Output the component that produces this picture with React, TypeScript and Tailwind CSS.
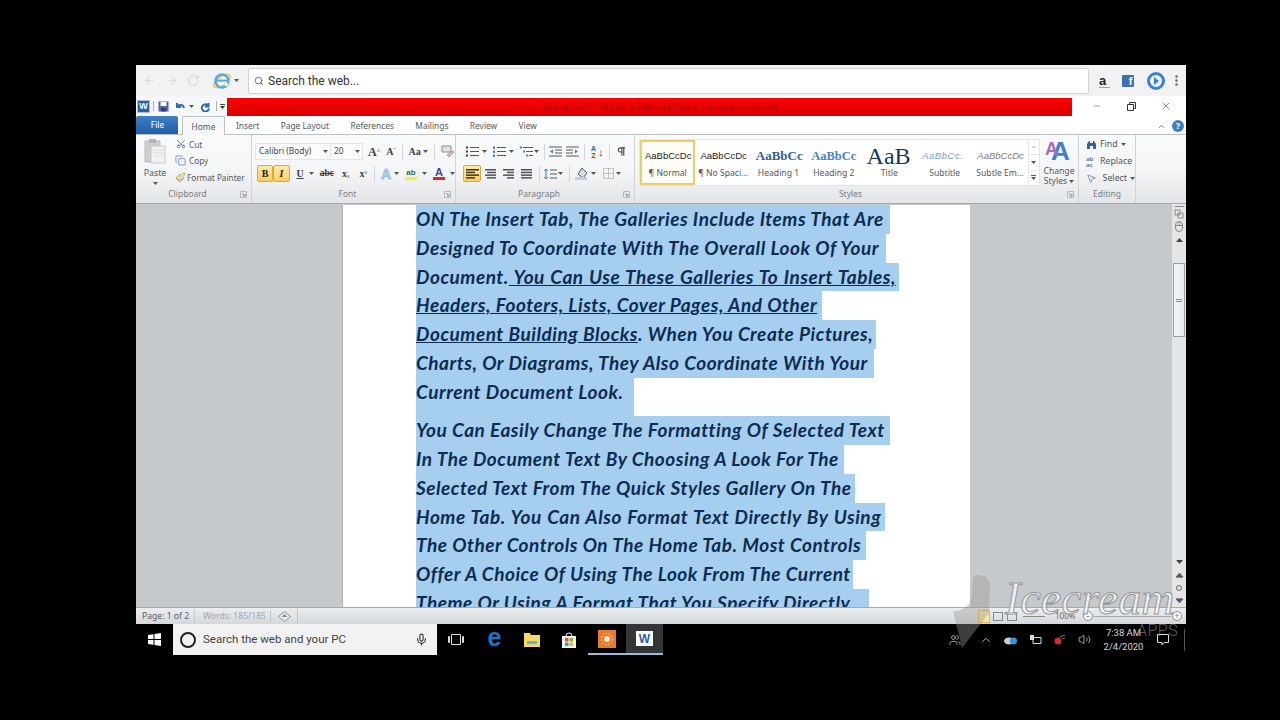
import React from "react";
import { ArrowLeft, ArrowRight, RotateCw, Search, X, Minus, Mic, ChevronUp, Scissors, Copy, Paintbrush, Volume2, Pilcrow, MousePointer2, Users } from "lucide-react";

const ui = "font-['Noto_Sans','Open_Sans',sans-serif]";

const Caret = ({ c = "#555" }: { c?: string }) => (
  <svg width="5" height="3" viewBox="0 0 5 3" className="shrink-0"><path d="M0 0h5L2.5 3z" fill={c} /></svg>
);

const Launcher = () => (
  <svg width="7" height="7" viewBox="0 0 7 7" className="shrink-0"><path d="M.5.5h6v6h-6z" fill="none" stroke="#b5b9be" /><path d="M2 2l3 3M5 3v2H3" stroke="#8d9196" fill="none" /></svg>
);

const Lines = ({ align = "left", active = false }: { align?: "left" | "center" | "right" | "justify"; active?: boolean }) => {
  const rows: Record<string, [number, number][]> = {
    left: [[1, 13], [1, 9], [1, 13], [1, 9]],
    center: [[1, 11], [3, 9], [1, 11], [3, 9]],
    right: [[1, 11], [5, 7], [1, 11], [5, 7]],
    justify: [[1, 11], [1, 11], [1, 11], [1, 11]],
  };
  return (
    <svg width="14" height="11" viewBox="0 0 14 11">
      {rows[align].map((r, i) => (
        <rect key={i} x={r[0]} y={1 + i * 2.7} width={r[1]} height="1.5" fill={active ? "#3d3520" : "#50545a"} />
      ))}
    </svg>
  );
};

const Group = ({ label, width, launcher = true, children }: { label: string; width: string; launcher?: boolean; children: React.ReactNode }) => (
  <div className={`${width} h-full flex flex-col border-r border-[#cfd2d6] shrink-0`}>
    <div className="flex-1 min-h-0">{children}</div>
    <div className={`h-[14px] mb-[2px] flex items-center justify-center relative text-[8.5px] text-[#7a7e83] ${launcher ? "pr-[12px]" : ""}`}>
      {label}
      {launcher && <span className="absolute right-[4px] top-[4px] flex"><Launcher /></span>}
    </div>
  </div>
);

const styleItems: { s: string; l: string; c: string }[] = [
  { s: "AaBbCcDc", l: "¶ Normal", c: "text-[9.5px] text-[#222] font-['Liberation_Sans',sans-serif]" },
  { s: "AaBbCcDc", l: "¶ No Spaci...", c: "text-[9.5px] text-[#222] font-['Liberation_Sans',sans-serif]" },
  { s: "AaBbCc", l: "Heading 1", c: "text-[13px] font-bold text-[#365f91] font-['Liberation_Serif',serif]" },
  { s: "AaBbCc", l: "Heading 2", c: "text-[12.500px] font-bold text-[#4f81bd] font-['Liberation_Serif',serif]" },
  { s: "AaB", l: "Title", c: "text-[24px] leading-[20px] text-[#17365d] font-['Liberation_Serif',serif]" },
  { s: "AaBbCc.", l: "Subtitle", c: "text-[9.5px] italic tracking-[0.6px] text-[#7b9cc7] font-['Liberation_Sans',sans-serif]" },
  { s: "AaBbCcDc", l: "Subtle Em...", c: "text-[9.5px] italic text-[#808080] font-['Liberation_Sans',sans-serif]" },
];

const lines1: { w: string; t: React.ReactNode; h?: string; s?: string }[] = [
  { w: "w-[474px]", t: "ON The Insert Tab, The Galleries Include Items That Are" },
  { w: "w-[470px]", t: "Designed To Coordinate With The Overall Look Of Your" },
  { w: "w-[483px]", t: <>Document.<span className="underline"> You Can Use These Galleries To Insert Tables,</span></>, s: "[word-spacing:0.7px]" },
  { w: "w-[406px]", t: <span className="underline">Headers, Footers, Lists, Cover Pages, And Other</span> },
  { w: "w-[460px]", t: <><span className="underline">Document Building Blocks</span>. When You Create Pictures,</> },
  { w: "w-[458px]", t: "Charts, Or Diagrams, They Also Coordinate With Your" },
  { w: "w-[218px]", t: "Current Document Look.", h: "h-[38.400px]" },
  { w: "w-[474px]", t: "You Can Easily Change The Formatting Of Selected Text" },
  { w: "w-[428px]", t: "In The Document Text By Choosing A Look For The" },
  { w: "w-[439px]", t: "Selected Text From The Quick Styles Gallery On The" },
  { w: "w-[469px]", t: "Home Tab. You Can Also Format Text Directly By Using", s: "[word-spacing:0.7px]" },
  { w: "w-[450px]", t: "The Other Controls On The Home Tab. Most Controls" },
  { w: "w-[437px]", t: "Offer A Choice Of Using The Look From The Current" },
  { w: "w-[453px]", t: "Theme Or Using A Format That You Specify Directly." },
];

const BrowserBar = () => (
  <div className="h-[31px] bg-[#f2f2f2] flex items-center shrink-0">
    <div className="w-[112px] flex items-center pl-[7px] gap-[9px] text-[#dadada] shrink-0">
      <ArrowLeft size={13} strokeWidth={2} />
      <ArrowRight size={13} strokeWidth={2} />
      <RotateCw size={13} strokeWidth={2} />
      <svg width="20" height="20" viewBox="0 0 20 20" className="ml-[3px] shrink-0">
        <ellipse cx="10" cy="10" rx="9.5" ry="4.5" transform="rotate(-35 10 10)" fill="none" stroke="#e6c34a" strokeWidth="1.5" />
        <circle cx="10" cy="10" r="6.5" fill="none" stroke="#53a8e2" strokeWidth="2.4" />
        <path d="M4.5 9.6h11" stroke="#53a8e2" strokeWidth="2" />
        <path d="M13 13l3 1" stroke="#f2f2f2" strokeWidth="3" />
      </svg>
      <span className="-ml-[7px]"><Caret /></span>
    </div>
    <div className="w-[841px] h-[26px] bg-white border border-[#d2d2d2] rounded-[2px] flex items-center pl-[5px] gap-[4px] shrink-0">
      <Search size={10} strokeWidth={2} className="text-[#555]" />
      <span className="text-[12px] text-[#333] font-['Roboto',sans-serif]">Search the web...</span>
    </div>
    <div className="flex-1 flex items-center pl-[10px] gap-[12px]">
      <span className="text-[13px] font-bold text-[#222] leading-none w-[11px] font-['Liberation_Sans',sans-serif] border-b border-[#e8952e]">a</span>
      <span className="w-[12px] h-[12px] bg-[#3b6fb6] rounded-[1px] flex items-end justify-end pr-[1.5px] text-white text-[11px] font-bold leading-none font-['Liberation_Sans',sans-serif]">f</span>
      <svg width="20" height="20" viewBox="0 0 20 20">
        <circle cx="10" cy="10" r="7.5" fill="none" stroke="#3a80d4" strokeWidth="3" />
        <path d="M8 6v8l5-4z" fill="#3a80d4" />
      </svg>
      <svg width="3" height="11" viewBox="0 0 3 11" className="-ml-[3px]"><circle cx="1.5" cy="1.5" r="1.2" fill="#666" /><circle cx="1.5" cy="5.5" r="1.2" fill="#666" /><circle cx="1.5" cy="9.5" r="1.2" fill="#666" /></svg>
    </div>
  </div>
);

const TitleBar = () => (
  <div className="h-[20px] bg-white flex items-center shrink-0">
    <div className="w-[91px] h-full flex items-center pl-[1px] gap-[3px] bg-[#f7f8fa] shrink-0">
      <span className="w-[13px] h-[13px] bg-[#2f5ea8] border border-[#a8c0e0] text-white text-[9px] leading-[11px] font-bold text-center font-['Liberation_Sans',sans-serif]">W</span>
      <span className="w-px h-[10px] bg-[#aab0b8]" />
      <svg width="11" height="11" viewBox="0 0 11 11" className="ml-[1px]"><path d="M.5.5h10v10H.5z" fill="#5263a8" /><path d="M2.5 1h6v4h-6z" fill="#fff" /><path d="M3 7h5v3.5H3z" fill="#2c3a70" /></svg>
      <svg width="12" height="11" viewBox="0 0 12 11" className="ml-[2px]"><path d="M3 2v4h4M3 6c2-3 6-3 7 1" fill="none" stroke="#2f6bb5" strokeWidth="2" /></svg>
      <Caret />
      <svg width="11" height="11" viewBox="0 0 11 11" className="ml-[3px]"><path d="M8.5 2v3.5H5M8.5 5A3.6 3.6 0 1 0 9 7.5" fill="none" stroke="#2f6bb5" strokeWidth="2" /></svg>
      <span className="w-px h-[10px] bg-[#aab0b8] ml-[2px]" />
      <span className="flex flex-col items-center gap-[1px]"><span className="w-[5px] h-px bg-[#444]" /><Caret c="#333" /></span>
    </div>
    <div className="w-[845px] h-[18px] mt-[1px] bg-gradient-to-b from-[#ff0000] to-[#d80000] flex items-center justify-center pl-[22px] shrink-0">
      <span className={`text-[9px] text-[#a80f0f] ${ui}`}>Document1 - Microsoft Word (Product Activation Failed)</span>
    </div>
    <div className="flex-1 flex items-center pl-[20px] text-[#444]">
      <Minus size={10} strokeWidth={1.2} />
      <svg width="9" height="9" viewBox="0 0 9 9" className="ml-[25px]"><path d="M.5 2.5h6v6h-6zM2.5 2.5v-2h6v6h-2" fill="none" stroke="#333" /></svg>
      <X size={12} strokeWidth={1.2} className="ml-[24px]" />
    </div>
  </div>
);

const TabBar = () => (
  <div className={`h-[19px] bg-white border-b border-[#bcbfc3] flex items-end shrink-0 text-[8.400px] text-[#53575c] ${ui}`}>
    <div className="w-[42px] h-[18px] bg-gradient-to-b from-[#3f80c6] to-[#1f5ca8] rounded-t-[2px] text-white flex items-center justify-center pl-[1px] pt-[1px] shrink-0">File</div>
    <div className="ml-[4px] w-[43px] h-[19px] bg-[#f7f8f9] border border-b-0 border-[#bcbfc3] rounded-t-[2px] -mb-px flex items-center justify-center pt-[2px] shrink-0">Home</div>
    <div className="h-[18px] flex items-center gap-[21.400px] pl-[11px] pt-[2px] flex-1">
      <span>Insert</span><span>Page Layout</span><span>References</span><span>Mailings</span><span>Review</span><span>View</span>
      <span className="flex-1" />
      <ChevronUp size={9} className="text-[#555] mr-[-15px]" />
      <span className="w-[12px] h-[12px] rounded-full bg-[#3b7fc9] text-white text-[9px] font-bold leading-[12px] text-center mr-[2px]">?</span>
    </div>
  </div>
);

const Clip = () => (
  <div className="h-full flex pl-[8px] pt-[1px]">
    <div className="w-[22px] flex flex-col items-center">
      <svg width="22" height="26" viewBox="0 0 22 26" className="mt-[2px]">
        <path d="M1 3h15v21H1z" fill="#cfcfcf" stroke="#bdbdbd" />
        <path d="M5 1h7v4H5z" fill="#b4b4b4" />
        <path d="M7 8h14v17H7z" fill="#f2f2f2" stroke="#c8c8c8" />
        <path d="M9 12h10M9 15h10M9 18h10" stroke="#dcdcdc" />
      </svg>
      <span className="text-[8.8px] mt-[4px] text-[#53575c] leading-[10px]">Paste</span>
      <span className="mt-[4px]"><Caret /></span>
    </div>
    <div className="ml-[9px] flex flex-col text-[8.2px] text-[#53575c] leading-[17px]">
      <div className="h-[16.500px] flex items-center gap-[3px] pl-[1px]"><Scissors size={10} className="text-[#4c6e9e] -rotate-90" /><span>Cut</span></div>
      <div className="h-[16.500px] flex items-center gap-[2px]"><Copy size={11} className="text-[#6e95c4]" /><span className="ml-[1px]">Copy</span></div>
      <div className="h-[16.500px] flex items-center gap-[1px]"><Paintbrush size={11} className="text-[#b59a45]" /><span className="whitespace-nowrap">Format Painter</span></div>
    </div>
  </div>
);

const Sep = ({ cls = "" }: { cls?: string }) => <span className={`w-px h-[16px] bg-[#d3d6da] ${cls}`} />;

const FontGroup = () => (
  <div className="pl-[3px] pt-[8px]">
    <div className="h-[17px] flex items-center">
      <div className="w-[76px] h-[17px] bg-[#fbfbfc] border border-[#e3e5e8] flex items-center justify-between pl-[3px] pr-[2px] text-[8.4px] text-[#444]">
        <span className="whitespace-nowrap">Calibri (Body)</span><Caret />
      </div>
      <div className="w-[32px] h-[17px] bg-[#fbfbfc] border border-l-0 border-[#e3e5e8] flex items-center justify-between pl-[3px] pr-[2px] text-[8.4px] text-[#444]">
        <span>20</span><Caret />
      </div>
      <span className="ml-[5px] text-[12px] font-bold text-[#3d4045] font-['Liberation_Serif',serif] leading-none">A<sup className="text-[6px] text-[#3d4045]">^</sup></span>
      <span className="ml-[6px] text-[10px] font-bold text-[#3d4045] font-['Liberation_Serif',serif] leading-none">A<sup className="text-[6px]">ˇ</sup></span>
      <Sep cls="ml-[7px]" />
      <span className="ml-[5px] text-[10px] font-bold text-[#3d4045] font-['Liberation_Serif',serif] leading-none">Aa</span>
      <span className="ml-[2px]"><Caret /></span>
      <Sep cls="ml-[6px]" />
      <svg width="14" height="13" viewBox="0 0 14 13" className="ml-[6px]"><path d="M1 1h9v6H1z" fill="#dfe3ea" stroke="#8a8f98" /><path d="M8 12l5-5-2-1-5 4z" fill="#e6b7c4" stroke="#8a6a76" strokeWidth=".6" /></svg>
    </div>
    <div className="h-[17px] mt-[5px] flex items-center text-[#3d4045] font-['Liberation_Serif',serif]">
      <span className="w-[18px] h-[17px] ml-[2px] bg-gradient-to-b from-[#fde9a6] to-[#fbcf5e] border border-[#d8a93f] rounded-[2px] text-[10px] font-bold flex items-center justify-center text-[#222]">B</span>
      <span className="w-[18px] h-[17px] ml-0 bg-gradient-to-b from-[#fde9a6] to-[#fbcf5e] border border-[#d8a93f] rounded-[2px] text-[10px] font-bold italic flex items-center justify-center text-[#222]">I</span>
      <span className="ml-[7px] text-[10px] font-bold underline leading-none">U</span>
      <span className="ml-[5px]"><Caret /></span>
      <span className="ml-[6px] text-[9.5px] font-bold line-through leading-none">abc</span>
      <span className="ml-[8px] text-[10px] font-bold leading-none">x<sub className="text-[5px] text-[#4a78b5]">2</sub></span>
      <span className="ml-[10px] text-[10px] font-bold leading-none">x<sup className="text-[5px] text-[#4a78b5]">2</sup></span>
      <Sep cls="ml-[7px]" />
      <span className="ml-[6px] text-[14px] font-bold text-[#b8d3ee] leading-none [-webkit-text-stroke:0.5px_#6f9fd2] font-['Liberation_Sans',sans-serif]">A</span>
      <span className="ml-[3px]"><Caret /></span>
      <span className="ml-[6px] flex flex-col items-center w-[12px]"><span className="text-[8px] font-bold text-[#3d6a3d] leading-[9px] font-['Liberation_Sans',sans-serif]">ab</span><span className="w-[12px] h-[3px] bg-[#f6ee3a]" /></span>
      <span className="ml-[5px]"><Caret /></span>
      <span className="ml-[6px] flex flex-col items-center w-[12px]"><span className="text-[11px] font-bold text-[#2f4f8f] leading-[10px] font-['Liberation_Sans',sans-serif]">A</span><span className="w-[12px] h-[3px] bg-[#d8272d]" /></span>
      <span className="ml-[5px]"><Caret /></span>
    </div>
  </div>
);

const ListIcon = ({ kind }: { kind: number }) => (
  <svg width="13" height="12" viewBox="0 0 13 12">
    {[1.5, 5.5, 9.5].map((y, i) => (
      <g key={i}>
        {kind === 0 && <rect x="0" y={y - 1} width="2" height="2" fill="#3a3d42" />}
        {kind === 1 && <rect x="0" y={y - 1} width="2" height="2.5" fill="#5a7db0" />}
        {kind === 2 && <rect x={i * 3} y={y - 1} width="2" height="2" fill="#5a7db0" />}
        <rect x={kind === 2 ? i * 3 + 3 : 4} y={y - 0.5} width={kind === 2 ? 10 - i * 3 : 9} height="1" fill="#54585d" />
      </g>
    ))}
  </svg>
);

const Indent = ({ flip = false }: { flip?: boolean }) => (
  <svg width="13" height="11" viewBox="0 0 13 11" className={flip ? "-scale-x-100" : ""}>
    <path d="M0 1h13M0 10h13M6 4h7M6 7h7" stroke="#54585d" />
    <path d="M4 3.5v4L1 5.5z" fill="#4a78b5" />
  </svg>
);

const Para = () => (
  <div className="pl-[9px] pt-[8px]">
    <div className="h-[17px] flex items-center">
      <span className="ml-[1px] flex"><ListIcon kind={0} /></span><span className="ml-[3px]"><Caret /></span>
      <span className="ml-[6px]"><ListIcon kind={1} /></span><span className="ml-[3px]"><Caret /></span>
      <span className="ml-[6px]"><ListIcon kind={2} /></span><span className="ml-[1px]"><Caret /></span>
      <Sep cls="ml-[5px]" />
      <span className="ml-[4px] flex"><Indent /></span>
      <span className="ml-[4px] flex"><Indent flip /></span>
      <Sep cls="ml-[5px]" />
      <span className="ml-[4px] w-[9px] text-[7px] leading-[7px] font-bold text-center"><span className="text-[#3d6fb0]">A</span><br /><span className="text-[#b03d3d]">Z</span></span>
      <span className="text-[11px] leading-none text-[#444]">↓</span>
      <Sep cls="ml-[5px]" />
      <Pilcrow size={11} strokeWidth={2.4} className="ml-[6px] text-[#45484c]" />
    </div>
    <div className="h-[17px] mt-[5px] flex items-center">
      <span className="w-[18px] h-[17px] -ml-[2px] bg-gradient-to-b from-[#fde9a6] to-[#fbcf5e] border border-[#d8a93f] rounded-[2px] flex items-center justify-center"><Lines active /></span>
      <span className="ml-[3px] flex"><Lines align="center" /></span>
      <span className="ml-[4px] flex"><Lines align="right" /></span>
      <span className="ml-[4px] flex"><Lines align="justify" /></span>
      <Sep cls="ml-[5px]" />
      <svg width="13" height="12" viewBox="0 0 13 12" className="ml-[4px]"><path d="M2 1v10" stroke="#4a78b5" /><path d="M0 3l2-2 2 2M0 9l2 2 2-2" fill="none" stroke="#4a78b5" /><path d="M6 2h7M6 6h7M6 10h7" stroke="#54585d" /></svg>
      <span className="ml-[1px]"><Caret /></span>
      <Sep cls="ml-[6px]" />
      <svg width="14" height="13" viewBox="0 0 14 13" className="ml-[5px]"><path d="M3 7l4-6 5 5-4 5z" fill="#d8dde6" stroke="#54585d" /><rect x="0" y="10" width="12" height="3" fill="#b6d0ea" /></svg>
      <span className="ml-[2px]"><Caret /></span>
      <svg width="11" height="11" viewBox="0 0 11 11" className="ml-[7px]"><path d="M.5.5h10v10H.5zM5.500 .5v10M.5 5.500h10" fill="none" stroke="#8d9197" strokeDasharray="1 1" /></svg>
      <span className="ml-[2px]"><Caret /></span>
    </div>
  </div>
);

const Styles = () => (
  <div className="flex pl-[4px] pt-[4px]">
    <div className="w-[401px] h-[47px] bg-white border border-[#e3e5e8] flex shrink-0">
      {styleItems.map((it, i) => (
        <div key={i} className={`w-[55.400px] h-full flex flex-col justify-between overflow-hidden shrink-0 ${i === 0 ? "border-2 border-[#f0cb6a] bg-[#fffdf5]" : ""}`}>
          <div className={`h-[22px] flex items-center whitespace-nowrap ${i === 0 ? "mt-[3px] pl-[3px]" : "mt-[5px] pl-[5px]"} ${it.c}`}>{it.s}</div>
          <div className={`text-[8.6px] leading-[12px] text-center whitespace-nowrap text-[#53575c] ${i === 0 ? "mb-[4px]" : "mb-[6px]"}`}>{it.l}</div>
        </div>
      ))}
      <div className="ml-auto w-[12px] border-l border-[#e3e5e8] flex flex-col text-[#777]">
        <div className="flex-1 flex items-center justify-center rotate-180"><Caret c="#c8c8c8" /></div>
        <div className="flex-1 flex items-center justify-center border-y border-[#e3e5e8]"><Caret /></div>
        <div className="flex-1 flex flex-col gap-px items-center justify-center"><span className="w-[5px] h-px bg-[#555]" /><Caret /></div>
      </div>
    </div>
    <div className="w-[36px] ml-[1px] flex flex-col items-center shrink-0">
      <span className="text-[26px] leading-[24px] font-bold text-[#3f7fd0] font-['Liberation_Sans',sans-serif] relative pl-[3px]">A<span className="absolute -left-[3px] top-[-2px] text-[18px] text-[#a86cc4]">A</span></span>
      <span className="text-[8.6px] leading-[10px] mt-[3px] text-[#53575c]">Change</span>
      <span className="text-[8.6px] leading-[10px] text-[#53575c] flex items-center gap-[2px]">Styles <Caret /></span>
    </div>
  </div>
);

const Editing = () => (
  <div className="flex flex-col pl-[7px] pt-[1px] text-[8.8px] text-[#53575c]">
    <div className="h-[17px] flex items-center gap-[3px]">
      <svg width="11" height="10" viewBox="0 0 11 10"><path d="M1 4l2-3h1v2h3V1h1l2 3v5H7V6H4v3H1z" fill="#3c5f95" /></svg>
      <span>Find</span><Caret />
    </div>
    <div className="h-[17px] flex items-center gap-[3px]"><span className="w-[11px] text-[6px] leading-[6px] font-bold text-[#5d7fa8]">ab<br />ac</span><span>Replace</span></div>
    <div className="h-[17px] flex items-center gap-[3px]"><MousePointer2 size={11} className="text-[#6d8cb3]" /><span className="ml-[3px]">Select</span><Caret /></div>
  </div>
);

const Ribbon = () => (
  <div className={`h-[69px] bg-gradient-to-b from-[#f9fafa] via-[#f5f6f7] to-[#e3e5e8] border-b border-[#a5a8ac] flex shrink-0 ${ui}`}>
    <Group label="Clipboard" width="w-[116px]"><Clip /></Group>
    <Group label="Font" width="w-[204px]"><FontGroup /></Group>
    <Group label="Paragraph" width="w-[179px]"><Para /></Group>
    <Group label="Styles" width="w-[444px]"><Styles /></Group>
    <Group label="Editing" width="w-[57px]" launcher={false}><Editing /></Group>
  </div>
);

const ScrollBar = () => (
  <div className="w-[14px] bg-[#e3e5e7] flex flex-col items-center shrink-0 text-[#666]">
    <span className="mt-[2px] w-[9px] h-px bg-[#888]" />
    <svg width="10" height="10" viewBox="0 0 10 10" className="mt-[2px]"><path d="M1 1h5v5H1zM4 4h5v5H4z" fill="none" stroke="#888" /></svg>
    <svg width="10" height="11" viewBox="0 0 10 11" className="mt-[2px]"><rect x="1.500" y=".5" width="7" height="10" rx="3.500" fill="none" stroke="#888" /><path d="M5 .5v4M1.500 4.500h7" stroke="#888" /></svg>
    <svg width="7" height="4" viewBox="0 0 7 4" className="mt-[6px]"><path d="M3.500 0L7 4H0z" fill="#444" /></svg>
    <div className="mt-[21px] w-[12px] h-[74px] bg-gradient-to-r from-[#f5f6f7] to-[#e8eaec] border border-[#9a9ea3] flex flex-col items-center justify-center gap-[1px]">
      <span className="w-[6px] h-px bg-[#888]" /><span className="w-[6px] h-px bg-[#888]" />
    </div>
    <div className="flex-1" />
    <svg width="7" height="4" viewBox="0 0 7 4" className="mb-[9px]"><path d="M3.500 4L7 0H0z" fill="#444" /></svg>
    <svg width="7" height="5" viewBox="0 0 7 5" className="mb-[7px]"><path d="M3.500 0L7 4H0zM0 4.500h7" fill="#555" stroke="#555" strokeWidth=".5" /></svg>
    <span className="w-[6px] h-[6px] rounded-full border border-[#666] mb-[7px]" />
    <svg width="7" height="5" viewBox="0 0 7 5" className="mb-[4px]"><path d="M3.500 5L7 1H0zM0 .5h7" fill="#555" stroke="#555" strokeWidth=".5" /></svg>
  </div>
);

const Doc = () => (
  <div className="h-[403px] bg-[#c6c9cc] flex overflow-hidden shrink-0">
    <div className="flex-1 min-w-0 pl-[206px] pt-[1px]">
      <div className="w-[628px] h-[420px] bg-white pl-[73px] border-l border-[#aeb0b3] font-['Lato','Open_Sans',sans-serif] font-bold italic text-[19px] text-[#0c2c52] tracking-[0.52px]">
        {lines1.map((l, i) => (
          <div key={i} className={`${l.w} ${l.h ?? "h-[28.800px]"} ${l.s ?? ""} bg-[#a6ceef] leading-[28.800px] whitespace-nowrap`}>{l.t}</div>
        ))}
      </div>
    </div>
    <ScrollBar />
  </div>
);

const StatusBar = () => (
  <div className={`h-[17px] bg-gradient-to-b from-[#eceef0] to-[#d5d8db] border-t border-[#a5a8ac] flex items-center text-[8.6px] text-[#5a5e63] shrink-0 ${ui}`}>
    <span className="pl-[6px] w-[59px] whitespace-nowrap border-r border-[#c3c6c9]">Page: 1 of 2</span>
    <span className="pl-[8px] w-[76px] whitespace-nowrap text-[#a3a6aa] border-r border-[#c3c6c9]">Words: 185/185</span>
    <span className="w-[27px] h-full flex items-center justify-center border-r border-[#c3c6c9]">
      <svg width="13" height="11" viewBox="0 0 13 11"><path d="M6.500 .5l6 5-6 5-6-5z" fill="#f5f0dc" stroke="#7d8fa8" /><path d="M3.500 6l3-3 3 3" fill="#5f8fc9" /></svg>
    </span>
    <div className="flex-1" />
    <div className="flex items-center pr-[4px] text-[#666]">
      <span className="w-[12px] h-[13px] border border-[#e3b74f] bg-[#f7e7ad]" />
      <span className="ml-[3px] w-[10px] h-[9px] border border-[#888]" />
      <span className="ml-[4px] w-[10px] h-[9px] border border-[#888]" />
      <span className="ml-[6px] w-[22px] h-px bg-[#888]" />
      <span className="ml-[10px] w-[20px] text-[8px] whitespace-nowrap">100%</span>
      <span className="ml-[8px] w-[10px] h-[10px] rounded-full border border-[#888] bg-white flex items-center justify-center text-[8px] leading-none">−</span>
      <span className="ml-[1px] w-[77px] h-px bg-[#aaa]" />
      <span className="ml-[1px] w-[10px] h-[10px] rounded-full border border-[#888] bg-white flex items-center justify-center text-[8px] leading-none">+</span>
    </div>
  </div>
);

const Taskbar = () => (
  <div className="h-[31px] bg-black flex items-center shrink-0 text-[#ddd]">
    <div className="w-[37px] flex justify-center shrink-0">
      <svg width="13" height="13" viewBox="0 0 13 13"><path d="M0 2l5.500-.8V6H0zM6.500 1L13 0v6H6.500zM0 7h5.500v4.800L0 11zM6.500 7H13v6l-6.500-1z" fill="#fff" /></svg>
    </div>
    <div className="w-[264px] h-[31px] bg-[#f2f2f2] flex items-center pl-[7px] shrink-0">
      <span className="w-[16px] h-[16px] rounded-full border-[2.500px] border-[#222] shrink-0" />
      <span className="ml-[7px] text-[11.500px] text-[#444] font-['Roboto',sans-serif] whitespace-nowrap">Search the web and your PC</span>
      <Mic size={13} className="ml-auto mr-[9px] text-[#333]" />
    </div>
    <div className="w-[38px] flex justify-center shrink-0">
      <svg width="16" height="11" viewBox="0 0 16 11"><path d="M3.500.5h9v10h-9zM.5 2.500h1v6h-1zM14.500 2.500h1v6h-1z" fill="none" stroke="#ddd" /></svg>
    </div>
    <div className="w-[39px] flex justify-center shrink-0 text-[#1678d2] text-[25px] font-bold leading-none pb-[5px] font-['Liberation_Sans',sans-serif]">e</div>
    <div className="w-[35px] flex justify-center shrink-0">
      <svg width="16" height="14" viewBox="0 0 16 14"><path d="M0 0h6l1 2h9v12H0z" fill="#f6d86b" /><path d="M3 8h10v3H3z" fill="#5fb4d8" /></svg>
    </div>
    <div className="w-[39px] flex justify-center shrink-0">
      <svg width="16" height="16" viewBox="0 0 16 16"><path d="M1 4h14v12H1z" fill="#f2f2f2" /><path d="M5 4a3 3 0 0 1 6 0" fill="none" stroke="#eee" /><rect x="4" y="6" width="3.500" height="3.500" fill="#e2502c" /><rect x="8.500" y="6" width="3.500" height="3.500" fill="#7fba3c" /><rect x="4" y="10.500" width="3.500" height="3.500" fill="#2f9bd8" /><rect x="8.500" y="10.500" width="3.500" height="3.500" fill="#f2b91e" /></svg>
    </div>
    <div className="w-[38px] h-full flex items-center justify-center border-b-2 border-[#9db8d8] shrink-0">
      <svg width="18" height="18" viewBox="0 0 18 18"><rect width="18" height="18" fill="#e87a2c" /><circle cx="9" cy="9" r="3" fill="#fbe1c6" /><circle cx="9" cy="9" r="5.500" fill="none" stroke="#fbe1c6" strokeDasharray="1.500 1.500" /></svg>
    </div>
    <div className="w-[37px] h-full bg-[#333537] flex items-center justify-center border-b-2 border-[#9db8d8] shrink-0">
      <span className="relative w-[17px] h-[15px] bg-[#fff] flex items-center justify-center text-[#2f5ea8] text-[12px] font-bold font-['Liberation_Sans',sans-serif] leading-none">W</span>
    </div>
    <div className="flex-1 flex items-center">
      <Users size={12} strokeWidth={1.3} className="ml-[286px] text-[#ddd]" />
      <ChevronUp size={14} strokeWidth={1.4} className="ml-[18px] text-[#ddd]" />
      <svg width="14" height="10" viewBox="0 0 14 10" className="ml-[11px]"><ellipse cx="5" cy="6" rx="5" ry="3.500" fill="#c9ccd0" /><circle cx="9.500" cy="6" r="3.500" fill="#3a94d6" /></svg>
      <svg width="12" height="10" viewBox="0 0 12 10" className="ml-[12px]"><path d="M3 2.500h8v6H3z" fill="none" stroke="#ddd" /><rect x="0" y="0" width="4" height="5" fill="#ddd" /></svg>
      <svg width="12" height="11" viewBox="0 0 12 11" className="ml-[12px]"><circle cx="4" cy="7" r="3.500" fill="#d02a36" /><path d="M6 3l5-2M8 5l3-1" stroke="#777" /></svg>
      <Volume2 size={13} strokeWidth={1.3} className="ml-[12px] text-[#ddd]" />
      <div className="ml-[10px] w-[45px] text-[9.500px] leading-[14px] text-center text-[#d8d8d8] whitespace-nowrap font-['Roboto',sans-serif]">7:38 AM<br />2/4/2020</div>
      <svg width="12" height="12" viewBox="0 0 12 12" className="ml-[11px]"><path d="M.5.500h11v8H7L5 11V8.500H.5z" fill="none" stroke="#ddd" /></svg>
      <span className="ml-[15px] w-px h-[22px] bg-[#555]" />
    </div>
  </div>
);

const Watermark = () => (
  <div className="absolute left-[817px] top-[510px] w-[233px] h-[75px] pointer-events-none">
    <svg width="38" height="75" viewBox="0 0 38 75" className="absolute left-0 top-0">
      <path d="M22 0C30-1 37 3 37 10L36 38 9 73 0 36C8 36 18 32 19 20 20 12 18 4 22 0z" fill="#999" fillOpacity="0.4" />
    </svg>
    <span className="absolute left-[52px] top-[-4px] text-[46px] leading-[56px] italic text-white/70 font-['Liberation_Serif',serif] [-webkit-text-stroke:1px_#94979b] whitespace-nowrap">Icecream</span>
    <span className="absolute left-[184px] top-[48px] text-[16px] leading-[16px] text-[#8a8c8f]/70 tracking-[0.5px] font-['Roboto',sans-serif] font-light">APPS</span>
  </div>
);

export default function App() {
  return (
    <div className="w-[1280px] h-[720px] bg-black pt-[65px] pl-[136px] overflow-hidden">
      <div className="relative w-[1050px] h-[590px] flex flex-col">
        <BrowserBar />
        <TitleBar />
        <TabBar />
        <Ribbon />
        <Doc />
        <StatusBar />
        <Taskbar />
        <Watermark />
      </div>
    </div>
  );
}
